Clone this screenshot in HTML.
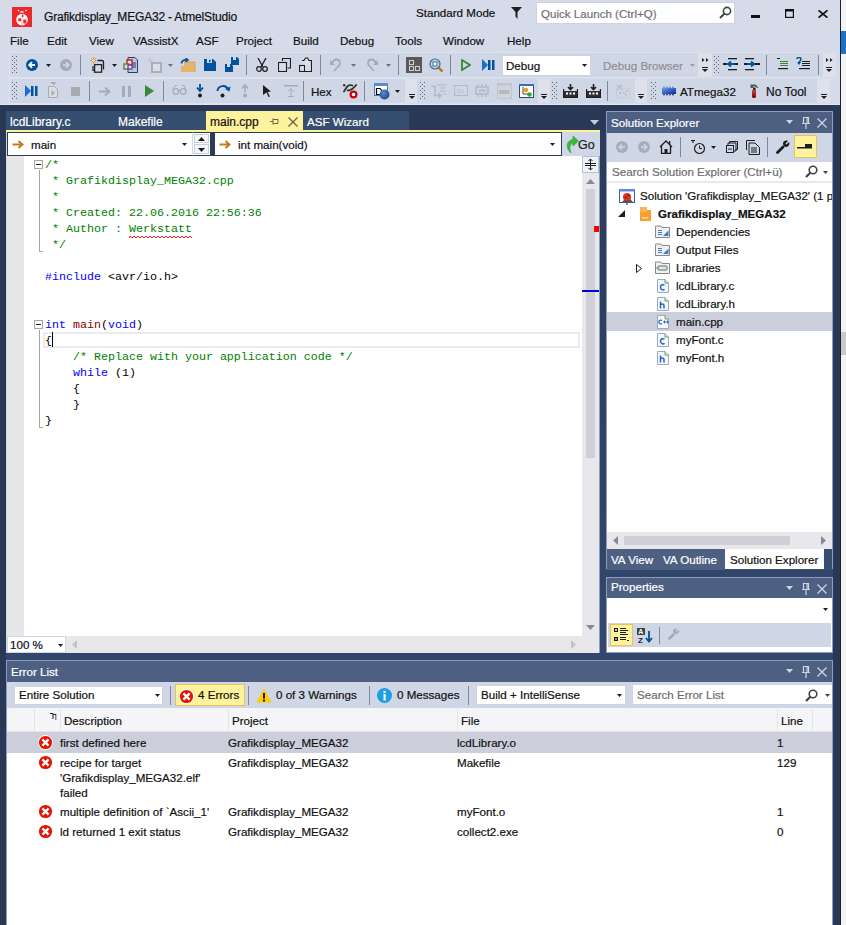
<!DOCTYPE html>
<html><head><meta charset="utf-8">
<style>
*{margin:0;padding:0;box-sizing:border-box}
html,body{width:846px;height:925px;overflow:hidden}
body{position:relative;background:#d6dbe9;font-family:"Liberation Sans",sans-serif;font-size:12px;color:#1e1e1e}
.a{position:absolute;display:block}
.t{position:absolute;white-space:nowrap;line-height:14px;-webkit-text-stroke:0.2px currentColor}
.code{position:absolute;left:45px;white-space:pre;font-family:"Liberation Mono",monospace;font-size:11.667px;line-height:16px;height:16px;color:#000}
</style></head><body>

<div class="a" style="left:841px;top:0px;width:5px;height:925px;background:#f3f3f3;"></div>
<div class="a" style="left:841px;top:31px;width:5px;height:23px;background:#1e72c6;"></div>
<div class="a" style="left:841px;top:332px;width:5px;height:23px;background:#c9c9c9;"></div>
<div class="a" style="left:840px;top:0px;width:1px;height:925px;background:#1a2030;"></div>
<div class="a" style="left:0px;top:105px;width:840px;height:820px;background:#293955;"></div>
<div class="a" style="left:0px;top:104px;width:840px;height:1px;background:#e3e6ef;"></div>
<div class="a" style="left:600px;top:132px;width:6px;height:521px;background:linear-gradient(#2b3b59,#34486b);"></div>
<div class="a" style="left:6px;top:653px;width:827px;height:7px;background:#32456a;"></div>
<div class="a" style="left:606px;top:569px;width:227px;height:8px;background:#32456a;"></div>
<svg class="a" style="left:12px;top:7px;" width="20" height="20" viewBox="0 0 20 20"><rect width="20" height="20" fill="#ea2a2a"/><circle cx="10" cy="12.6" r="5.8" fill="#fff"/><path d="M7.5 5.5Q10 2.5 12.5 5.5Z" fill="#fff"/><circle cx="6.5" cy="3.5" r="0.8" fill="#fff"/><circle cx="14" cy="3.5" r="0.8" fill="#fff"/><rect x="9.8" y="7.5" width="1.6" height="2.8" fill="#ea2a2a"/><rect x="6.3" y="11.3" width="3" height="3" fill="#ea2a2a"/><rect x="11.3" y="12.5" width="3" height="4" fill="#ea2a2a"/><rect x="9.6" y="13" width="0.9" height="6" fill="#f3a0a0"/></svg>
<div class="t" style="left:44px;top:10px;color:#111;font-size:12px;letter-spacing:-0.19px">Grafikdisplay_MEGA32 - AtmelStudio</div>
<div class="t" style="left:416px;top:6px;color:#111;font-size:11.6px;">Standard Mode</div>
<svg class="a" style="left:511px;top:7px;" width="11" height="12" viewBox="0 0 11 12"><path d="M0 0H11L6.5 5V12L4.5 9.5V5Z" fill="#1e1e1e"/></svg>
<div class="a" style="left:536px;top:2px;width:199px;height:22px;background:#fff;border:1px solid #cdd3e0"></div>
<div class="t" style="left:541px;top:7px;color:#717171;font-size:11.6px;">Quick Launch (Ctrl+Q)</div>
<svg class="a" style="left:719px;top:6px;" width="13" height="13" viewBox="0 0 13 13"><circle cx="8" cy="5" r="3.6" fill="none" stroke="#424242" stroke-width="1.6"/><path d="M5.5 7.5L1 12" stroke="#424242" stroke-width="2"/></svg>
<div class="a" style="left:751px;top:15px;width:9px;height:3px;background:#111;"></div>
<svg class="a" style="left:785px;top:9px;" width="9" height="9" viewBox="0 0 9 9"><rect x="0.6" y="0.6" width="7.8" height="7.8" fill="none" stroke="#111" stroke-width="1.2"/><rect x="0" y="0" width="9" height="2.5" fill="#111"/></svg>
<svg class="a" style="left:818px;top:10px;" width="10" height="8" viewBox="0 0 10 8"><path d="M0.5 0.3L9.5 7.7M9.5 0.3L0.5 7.7" stroke="#111" stroke-width="1.7"/></svg>
<div class="t" style="left:10px;top:34px;color:#111;font-size:11.6px;">File</div>
<div class="t" style="left:47px;top:34px;color:#111;font-size:11.6px;">Edit</div>
<div class="t" style="left:89px;top:34px;color:#111;font-size:11.6px;">View</div>
<div class="t" style="left:133px;top:34px;color:#111;font-size:11.6px;">VAssistX</div>
<div class="t" style="left:196px;top:34px;color:#111;font-size:11.6px;">ASF</div>
<div class="t" style="left:236px;top:34px;color:#111;font-size:11.6px;">Project</div>
<div class="t" style="left:293px;top:34px;color:#111;font-size:11.6px;">Build</div>
<div class="t" style="left:340px;top:34px;color:#111;font-size:11.6px;">Debug</div>
<div class="t" style="left:395px;top:34px;color:#111;font-size:11.6px;">Tools</div>
<div class="t" style="left:443px;top:34px;color:#111;font-size:11.6px;">Window</div>
<div class="t" style="left:507px;top:34px;color:#111;font-size:11.6px;">Help</div>
<div class="a" style="left:9px;top:52px;width:690px;height:26px;background:#dde2ec;"></div>
<div class="a" style="left:10px;top:53px;width:688px;height:24px;background:#cfd6e5;"></div>
<div class="a" style="left:698px;top:53px;width:13px;height:24px;background:#dce1eb;"></div>
<div class="a" style="left:711px;top:52px;width:113px;height:26px;background:#dde2ec;"></div>
<div class="a" style="left:712px;top:53px;width:111px;height:24px;background:#cfd6e5;"></div>
<div class="a" style="left:823px;top:53px;width:13px;height:24px;background:#dce1eb;"></div>
<div class="a" style="left:9px;top:78px;width:397px;height:26px;background:#dde2ec;"></div>
<div class="a" style="left:10px;top:79px;width:395px;height:24px;background:#cfd6e5;"></div>
<div class="a" style="left:405px;top:79px;width:12px;height:24px;background:#dce1eb;"></div>
<div class="a" style="left:417px;top:79px;width:121px;height:24px;background:#cfd6e5;"></div>
<div class="a" style="left:538px;top:79px;width:12px;height:24px;background:#dce1eb;"></div>
<div class="a" style="left:550px;top:79px;width:85px;height:24px;background:#cfd6e5;"></div>
<div class="a" style="left:635px;top:79px;width:12px;height:24px;background:#dce1eb;"></div>
<div class="a" style="left:647px;top:79px;width:170px;height:24px;background:#cfd6e5;"></div>
<div class="a" style="left:817px;top:79px;width:13px;height:24px;background:#dce1eb;"></div>
<svg class="a" style="left:12px;top:56px;" width="5" height="18" viewBox="0 0 5 18"><rect x="0" y="0" width="1" height="1" fill="#5f6777"/><rect x="4" y="0" width="1" height="1" fill="#5f6777"/><rect x="2" y="2" width="1" height="1" fill="#5f6777"/><rect x="0" y="4" width="1" height="1" fill="#5f6777"/><rect x="4" y="4" width="1" height="1" fill="#5f6777"/><rect x="2" y="6" width="1" height="1" fill="#5f6777"/><rect x="0" y="8" width="1" height="1" fill="#5f6777"/><rect x="4" y="8" width="1" height="1" fill="#5f6777"/><rect x="2" y="10" width="1" height="1" fill="#5f6777"/><rect x="0" y="12" width="1" height="1" fill="#5f6777"/><rect x="4" y="12" width="1" height="1" fill="#5f6777"/><rect x="2" y="14" width="1" height="1" fill="#5f6777"/><rect x="0" y="16" width="1" height="1" fill="#5f6777"/><rect x="4" y="16" width="1" height="1" fill="#5f6777"/></svg>
<svg class="a" style="left:714px;top:56px;" width="5" height="18" viewBox="0 0 5 18"><rect x="0" y="0" width="1" height="1" fill="#5f6777"/><rect x="4" y="0" width="1" height="1" fill="#5f6777"/><rect x="2" y="2" width="1" height="1" fill="#5f6777"/><rect x="0" y="4" width="1" height="1" fill="#5f6777"/><rect x="4" y="4" width="1" height="1" fill="#5f6777"/><rect x="2" y="6" width="1" height="1" fill="#5f6777"/><rect x="0" y="8" width="1" height="1" fill="#5f6777"/><rect x="4" y="8" width="1" height="1" fill="#5f6777"/><rect x="2" y="10" width="1" height="1" fill="#5f6777"/><rect x="0" y="12" width="1" height="1" fill="#5f6777"/><rect x="4" y="12" width="1" height="1" fill="#5f6777"/><rect x="2" y="14" width="1" height="1" fill="#5f6777"/><rect x="0" y="16" width="1" height="1" fill="#5f6777"/><rect x="4" y="16" width="1" height="1" fill="#5f6777"/></svg>
<svg class="a" style="left:12px;top:82px;" width="5" height="18" viewBox="0 0 5 18"><rect x="0" y="0" width="1" height="1" fill="#5f6777"/><rect x="4" y="0" width="1" height="1" fill="#5f6777"/><rect x="2" y="2" width="1" height="1" fill="#5f6777"/><rect x="0" y="4" width="1" height="1" fill="#5f6777"/><rect x="4" y="4" width="1" height="1" fill="#5f6777"/><rect x="2" y="6" width="1" height="1" fill="#5f6777"/><rect x="0" y="8" width="1" height="1" fill="#5f6777"/><rect x="4" y="8" width="1" height="1" fill="#5f6777"/><rect x="2" y="10" width="1" height="1" fill="#5f6777"/><rect x="0" y="12" width="1" height="1" fill="#5f6777"/><rect x="4" y="12" width="1" height="1" fill="#5f6777"/><rect x="2" y="14" width="1" height="1" fill="#5f6777"/><rect x="0" y="16" width="1" height="1" fill="#5f6777"/><rect x="4" y="16" width="1" height="1" fill="#5f6777"/></svg>
<svg class="a" style="left:420px;top:82px;" width="5" height="18" viewBox="0 0 5 18"><rect x="0" y="0" width="1" height="1" fill="#5f6777"/><rect x="4" y="0" width="1" height="1" fill="#5f6777"/><rect x="2" y="2" width="1" height="1" fill="#5f6777"/><rect x="0" y="4" width="1" height="1" fill="#5f6777"/><rect x="4" y="4" width="1" height="1" fill="#5f6777"/><rect x="2" y="6" width="1" height="1" fill="#5f6777"/><rect x="0" y="8" width="1" height="1" fill="#5f6777"/><rect x="4" y="8" width="1" height="1" fill="#5f6777"/><rect x="2" y="10" width="1" height="1" fill="#5f6777"/><rect x="0" y="12" width="1" height="1" fill="#5f6777"/><rect x="4" y="12" width="1" height="1" fill="#5f6777"/><rect x="2" y="14" width="1" height="1" fill="#5f6777"/><rect x="0" y="16" width="1" height="1" fill="#5f6777"/><rect x="4" y="16" width="1" height="1" fill="#5f6777"/></svg>
<svg class="a" style="left:552px;top:82px;" width="5" height="18" viewBox="0 0 5 18"><rect x="0" y="0" width="1" height="1" fill="#5f6777"/><rect x="4" y="0" width="1" height="1" fill="#5f6777"/><rect x="2" y="2" width="1" height="1" fill="#5f6777"/><rect x="0" y="4" width="1" height="1" fill="#5f6777"/><rect x="4" y="4" width="1" height="1" fill="#5f6777"/><rect x="2" y="6" width="1" height="1" fill="#5f6777"/><rect x="0" y="8" width="1" height="1" fill="#5f6777"/><rect x="4" y="8" width="1" height="1" fill="#5f6777"/><rect x="2" y="10" width="1" height="1" fill="#5f6777"/><rect x="0" y="12" width="1" height="1" fill="#5f6777"/><rect x="4" y="12" width="1" height="1" fill="#5f6777"/><rect x="2" y="14" width="1" height="1" fill="#5f6777"/><rect x="0" y="16" width="1" height="1" fill="#5f6777"/><rect x="4" y="16" width="1" height="1" fill="#5f6777"/></svg>
<svg class="a" style="left:651px;top:82px;" width="5" height="18" viewBox="0 0 5 18"><rect x="0" y="0" width="1" height="1" fill="#5f6777"/><rect x="4" y="0" width="1" height="1" fill="#5f6777"/><rect x="2" y="2" width="1" height="1" fill="#5f6777"/><rect x="0" y="4" width="1" height="1" fill="#5f6777"/><rect x="4" y="4" width="1" height="1" fill="#5f6777"/><rect x="2" y="6" width="1" height="1" fill="#5f6777"/><rect x="0" y="8" width="1" height="1" fill="#5f6777"/><rect x="4" y="8" width="1" height="1" fill="#5f6777"/><rect x="2" y="10" width="1" height="1" fill="#5f6777"/><rect x="0" y="12" width="1" height="1" fill="#5f6777"/><rect x="4" y="12" width="1" height="1" fill="#5f6777"/><rect x="2" y="14" width="1" height="1" fill="#5f6777"/><rect x="0" y="16" width="1" height="1" fill="#5f6777"/><rect x="4" y="16" width="1" height="1" fill="#5f6777"/></svg>
<svg class="a" style="left:702px;top:58px;" width="7" height="15" viewBox="0 0 7 15"><path d="M0 0L2.5 2L0 4ZM4 0L6.5 2L4 4Z" fill="#1e1e1e"/><rect x="0" y="9" width="6" height="1" fill="#1e1e1e"/><path d="M0 11H6L3 14Z" fill="#1e1e1e"/></svg>
<svg class="a" style="left:826px;top:58px;" width="7" height="15" viewBox="0 0 7 15"><path d="M0 0L2.5 2L0 4ZM4 0L6.5 2L4 4Z" fill="#1e1e1e"/><rect x="0" y="9" width="6" height="1" fill="#1e1e1e"/><path d="M0 11H6L3 14Z" fill="#1e1e1e"/></svg>
<svg class="a" style="left:409px;top:85px;" width="7" height="15" viewBox="0 0 7 15"><rect x="0" y="9" width="6" height="1" fill="#1e1e1e"/><path d="M0 11H6L3 14Z" fill="#1e1e1e"/></svg>
<svg class="a" style="left:541px;top:85px;" width="7" height="15" viewBox="0 0 7 15"><rect x="0" y="9" width="6" height="1" fill="#1e1e1e"/><path d="M0 11H6L3 14Z" fill="#1e1e1e"/></svg>
<svg class="a" style="left:638px;top:85px;" width="7" height="15" viewBox="0 0 7 15"><rect x="0" y="9" width="6" height="1" fill="#1e1e1e"/><path d="M0 11H6L3 14Z" fill="#1e1e1e"/></svg>
<svg class="a" style="left:821px;top:85px;" width="7" height="15" viewBox="0 0 7 15"><rect x="0" y="9" width="6" height="1" fill="#1e1e1e"/><path d="M0 11H6L3 14Z" fill="#1e1e1e"/></svg>
<svg class="a" style="left:26px;top:59px;" width="12" height="12" viewBox="0 0 12 12"><circle cx="6" cy="6" r="6" fill="#00539c"/><path d="M9 6H3.5M6 3.2L3.2 6L6 8.8" stroke="#fff" stroke-width="1.8" fill="none"/></svg>
<svg class="a" style="left:46px;top:64px;" width="5" height="3" viewBox="0 0 5 3"><path d="M0 0H5L2.5 3Z" fill="#1e1e1e"/></svg>
<svg class="a" style="left:60px;top:59px;" width="12" height="12" viewBox="0 0 12 12"><circle cx="6" cy="6" r="6" fill="#a6abb4"/><path d="M3 6H8.5M6 3.2L8.8 6L6 8.8" stroke="#d5d9e2" stroke-width="1.6" fill="none"/></svg>
<div class="a" style="left:80px;top:55px;width:1px;height:20px;background:#7b879d;"></div>
<svg class="a" style="left:90px;top:57px;" width="15" height="16" viewBox="0 0 15 16"><path d="M3.5 0.5V6.5M0.5 3.5H6.5M1.5 1.5L5.5 5.5M5.5 1.5L1.5 5.5" stroke="#d07a10" stroke-width="0.9"/><circle cx="3.5" cy="3.5" r="1.3" fill="#fff3d0"/><path d="M7.5 3.5H12C13 3.5 13.5 4 13.5 5V12.5" stroke="#222" fill="none" stroke-width="1.3"/><rect x="4.6" y="7.6" width="7" height="7.6" fill="#d5dae5" stroke="#222" stroke-width="1.3"/><path d="M3 9V13.5H4" stroke="#222" fill="none" stroke-width="1.2"/></svg>
<svg class="a" style="left:112px;top:64px;" width="5" height="3" viewBox="0 0 5 3"><path d="M0 0H5L2.5 3Z" fill="#1e1e1e"/></svg>
<svg class="a" style="left:123px;top:57px;" width="15" height="16" viewBox="0 0 15 16"><path d="M5 0.5H12L14.5 3V15.5H5Z" fill="#b6c7e6" stroke="#2c3e60"/><path d="M8 6H13M8 8H13M8 10H13" stroke="#2c3e60"/><rect x="4" y="3" width="5" height="5" fill="#fce" stroke="#c81e1e" stroke-width="1.4"/><rect x="1" y="7" width="5" height="5" fill="#fce" stroke="#3c8c3c" stroke-width="1.4"/><rect x="5" y="8" width="4" height="4" fill="#fce" stroke="#5a3c8c" stroke-width="1.2"/></svg>
<svg class="a" style="left:147px;top:57px;" width="15" height="16" viewBox="0 0 15 16"><path d="M3.5 0.5V6.5M0.5 3.5H6.5M1.5 1.5L5.5 5.5M5.5 1.5L1.5 5.5" stroke="#c3c7cf" stroke-width="0.9"/><rect x="5" y="6" width="9" height="9" fill="#d9dde6" stroke="#a6abb4" stroke-width="1.8"/></svg>
<svg class="a" style="left:168px;top:64px;" width="5" height="3" viewBox="0 0 5 3"><path d="M0 0H5L2.5 3Z" fill="#717171"/></svg>
<svg class="a" style="left:180px;top:58px;" width="16" height="15" viewBox="0 0 16 15"><path d="M4 4H15V14H1V8H4Z" fill="#dcb67a"/><path d="M4 4H15V14" fill="none" stroke="#e0a050"/><path d="M4 9H15L13 14H1Z" fill="#e8b45e"/><path d="M1.5 5.5C1.5 2.5 4 1.5 7 2" stroke="#00539c" stroke-width="1.8" fill="none"/><path d="M5.5 0L8 2L5.5 4" stroke="#00539c" stroke-width="1.6" fill="none"/></svg>
<svg class="a" style="left:204px;top:59px;" width="12" height="12" viewBox="0 0 12 12"><path d="M0 0H9L12 3V12H0Z" fill="#00539c"/><rect x="3" y="0" width="5" height="4" fill="#cfd6e5"/><rect x="5" y="0.8" width="1.5" height="2.5" fill="#00539c"/></svg>
<svg class="a" style="left:224px;top:57px;" width="16" height="16" viewBox="0 0 16 16"><path d="M7 0H13L15 2V8H7Z" fill="#00539c"/><rect x="9" y="0" width="3" height="3" fill="#cfd6e5"/><path d="M1 7H7L9 9V15H1Z" fill="#00539c"/><rect x="3" y="7" width="3" height="3" fill="#cfd6e5"/></svg>
<div class="a" style="left:246px;top:55px;width:1px;height:20px;background:#7b879d;"></div>
<svg class="a" style="left:255px;top:58px;" width="14" height="14" viewBox="0 0 14 14"><path d="M3 0L8 9M11 0L6 9" stroke="#1e1e1e" stroke-width="1.3"/><circle cx="4" cy="11" r="2.3" fill="none" stroke="#1e1e1e" stroke-width="1.2"/><circle cx="10" cy="11" r="2.3" fill="none" stroke="#1e1e1e" stroke-width="1.2"/></svg>
<svg class="a" style="left:278px;top:58px;" width="13" height="14" viewBox="0 0 13 14"><path d="M4.5 3V0.5H12.5V10H9.5" fill="none" stroke="#1e1e1e" stroke-width="1.1"/><rect x="0.5" y="4.5" width="8" height="9" fill="#d9dde6" stroke="#1e1e1e" stroke-width="1.1"/></svg>
<svg class="a" style="left:299px;top:57px;" width="13" height="15" viewBox="0 0 13 15"><path d="M3 3.5H5L6.5 1H8.5L10 3.5H12.5V14.5H6" fill="#d9dde6" stroke="#1e1e1e" stroke-width="1.1"/><rect x="0.5" y="8.5" width="5" height="6" fill="#d9dde6" stroke="#1e1e1e" stroke-width="1.1"/></svg>
<div class="a" style="left:320px;top:55px;width:1px;height:20px;background:#7b879d;"></div>
<svg class="a" style="left:330px;top:58px;" width="13" height="14" viewBox="0 0 13 14"><path d="M4 13L9 7.5C11 5.5 10 1.5 6.5 1.5C4.5 1.5 3 3 2 5" stroke="#a6abb4" stroke-width="1.8" fill="none"/><path d="M0 2V7H5Z" fill="#a6abb4"/></svg>
<svg class="a" style="left:351px;top:64px;" width="5" height="3" viewBox="0 0 5 3"><path d="M0 0H5L2.5 3Z" fill="#717171"/></svg>
<svg class="a" style="left:365px;top:58px;" width="13" height="14" viewBox="0 0 13 14"><path d="M9 13L4 7.5C2 5.5 3 1.5 6.5 1.5C8.5 1.5 10 3 11 5" stroke="#a6abb4" stroke-width="1.8" fill="none"/><path d="M13 2V7H8Z" fill="#a6abb4"/></svg>
<svg class="a" style="left:386px;top:64px;" width="5" height="3" viewBox="0 0 5 3"><path d="M0 0H5L2.5 3Z" fill="#717171"/></svg>
<div class="a" style="left:398px;top:55px;width:1px;height:20px;background:#7b879d;"></div>
<svg class="a" style="left:406px;top:57px;" width="16" height="16" viewBox="0 0 16 16"><rect width="16" height="16" fill="#595959"/><rect x="3.5" y="3.5" width="4" height="4" fill="none" stroke="#d0d0d0"/><rect x="3.5" y="9.5" width="4" height="4" fill="none" stroke="#d0d0d0"/><rect x="9.5" y="9.5" width="4" height="4" fill="none" stroke="#d0d0d0"/></svg>
<svg class="a" style="left:429px;top:58px;" width="15" height="15" viewBox="0 0 15 15"><path d="M9 9L13.5 13.5" stroke="#c76a12" stroke-width="2.4"/><circle cx="6" cy="6" r="5" fill="#a9dcf0" stroke="#4e6a84" stroke-width="1.2"/><rect x="4" y="4" width="4" height="4" fill="#fff" stroke="#4e6a84"/></svg>
<div class="a" style="left:450px;top:55px;width:1px;height:20px;background:#7b879d;"></div>
<svg class="a" style="left:461px;top:59px;" width="10" height="12" viewBox="0 0 10 12"><path d="M1 1L9 6L1 11Z" fill="none" stroke="#388a34" stroke-width="1.8"/></svg>
<svg class="a" style="left:482px;top:59px;" width="13" height="12" viewBox="0 0 13 12"><path d="M0 0L6 6L0 12Z" fill="#1c6ad6"/><rect x="6" y="1" width="2.5" height="10" fill="#00539c"/><rect x="10" y="1" width="2.5" height="10" fill="#00539c"/></svg>
<div class="a" style="left:502px;top:55px;width:89px;height:21px;background:#fff;border:1px solid #cdd3e0"></div>
<div class="t" style="left:506px;top:59px;color:#111;font-size:11.6px;">Debug</div>
<svg class="a" style="left:582px;top:64px;" width="5" height="3" viewBox="0 0 5 3"><path d="M0 0H5L2.5 3Z" fill="#1e1e1e"/></svg>
<div class="t" style="left:603px;top:59px;color:#8f8f93;font-size:11.6px;">Debug Browser</div>
<svg class="a" style="left:690px;top:64px;" width="5" height="3" viewBox="0 0 5 3"><path d="M0 0H5L2.5 3Z" fill="#9d9da5"/></svg>
<svg class="a" style="left:723px;top:58px;" width="15" height="13" viewBox="0 0 15 13"><rect x="5" y="0" width="9" height="1.3" fill="#1e1e1e"/><rect x="0" y="5" width="4" height="2" fill="#1e1e1e"/><rect x="9" y="5" width="6" height="2" fill="#1e1e1e"/><rect x="5" y="11" width="9" height="1.3" fill="#1e1e1e"/><path d="M12 6H5.5M8 3.5L5 6L8 8.5" stroke="#00539c" stroke-width="1.8" fill="none"/></svg>
<svg class="a" style="left:744px;top:58px;" width="16" height="13" viewBox="0 0 16 13"><rect x="1" y="0" width="9" height="1.3" fill="#1e1e1e"/><rect x="0" y="5" width="4" height="2" fill="#1e1e1e"/><rect x="10" y="5" width="6" height="2" fill="#1e1e1e"/><rect x="1" y="11" width="9" height="1.3" fill="#1e1e1e"/><path d="M3 6H9.5M7 3.5L10 6L7 8.5" stroke="#00539c" stroke-width="1.8" fill="none"/></svg>
<div class="a" style="left:766px;top:55px;width:1px;height:20px;background:#7b879d;"></div>
<svg class="a" style="left:777px;top:58px;" width="11" height="12" viewBox="0 0 11 12"><rect x="0" y="0" width="3" height="1" fill="#1e1e1e"/><rect x="3" y="3" width="8" height="1" fill="#388a34"/><rect x="3" y="5" width="8" height="1" fill="#388a34"/><rect x="3" y="7" width="8" height="1" fill="#388a34"/><rect x="1" y="10" width="10" height="1.2" fill="#1e1e1e"/></svg>
<svg class="a" style="left:796px;top:57px;" width="15" height="14" viewBox="0 0 15 14"><path d="M1 2C1 0 5 0 5 2C5 4 3 4 3 6" stroke="#00539c" stroke-width="1.5" fill="none"/><path d="M1 5L3 8L5 5" fill="#00539c"/><rect x="6" y="4" width="8" height="1" fill="#1e1e1e"/><rect x="6" y="6" width="8" height="1" fill="#1e1e1e"/><rect x="6" y="8" width="8" height="1" fill="#1e1e1e"/><rect x="3" y="11" width="11" height="1.2" fill="#1e1e1e"/></svg>
<div class="a" style="left:818px;top:55px;width:1px;height:20px;background:#7b879d;"></div>
<svg class="a" style="left:25px;top:85px;" width="13" height="12" viewBox="0 0 13 12"><path d="M0 0L6 6L0 12Z" fill="#1c6ad6"/><rect x="6" y="1" width="2.5" height="10" fill="#00539c"/><rect x="10" y="1" width="2.5" height="10" fill="#00539c"/></svg>
<svg class="a" style="left:48px;top:82px;" width="11" height="16" viewBox="0 0 11 16"><path d="M2 0H9L5.5 3Z" fill="#a6abb4"/><path d="M0.5 4.5H6.5L9.5 7.5V15.5H0.5Z" fill="#d9dde6" stroke="#a6abb4"/><path d="M3.5 8L7 11L3.5 14Z" fill="#a6abb4"/></svg>
<div class="a" style="left:71px;top:87px;width:9px;height:9px;background:#a6abb4;"></div>
<div class="a" style="left:89px;top:81px;width:1px;height:20px;background:#7b879d;"></div>
<svg class="a" style="left:99px;top:86px;" width="13" height="11" viewBox="0 0 13 11"><path d="M0 5.5H10M6 1.5L10.5 5.5L6 9.5" stroke="#a6abb4" stroke-width="1.8" fill="none"/></svg>
<svg class="a" style="left:122px;top:86px;" width="10" height="11" viewBox="0 0 10 11"><rect x="0" y="0" width="3" height="11" fill="#a6abb4"/><rect x="6" y="0" width="3" height="11" fill="#a6abb4"/></svg>
<svg class="a" style="left:145px;top:85px;" width="9" height="12" viewBox="0 0 9 12"><path d="M0 0L9 6L0 12Z" fill="#388a34"/></svg>
<div class="a" style="left:163px;top:81px;width:1px;height:20px;background:#7b879d;"></div>
<svg class="a" style="left:172px;top:85px;" width="15" height="10" viewBox="0 0 15 10"><path d="M1 5L3 0.5H5M14 5L12 0.5H10" stroke="#a6abb4" fill="none"/><circle cx="3.8" cy="6.5" r="2.8" fill="none" stroke="#a6abb4" stroke-width="1.3"/><circle cx="11.2" cy="6.5" r="2.8" fill="none" stroke="#a6abb4" stroke-width="1.3"/><path d="M6.5 6H8.5" stroke="#a6abb4"/></svg>
<svg class="a" style="left:196px;top:84px;" width="8" height="14" viewBox="0 0 8 14"><path d="M4 0V6M1 3.5L4 7L7 3.5" stroke="#00539c" stroke-width="1.8" fill="none"/><circle cx="4" cy="11.5" r="2" fill="#1e1e1e"/></svg>
<svg class="a" style="left:216px;top:84px;" width="15" height="14" viewBox="0 0 15 14"><path d="M1.5 7C2 1.5 10 0 12 5.5" stroke="#00539c" stroke-width="2" fill="none"/><path d="M9 5L13.5 7.5L14.5 2.5Z" fill="#00539c"/><circle cx="6.5" cy="11.5" r="2" fill="#1e1e1e"/></svg>
<svg class="a" style="left:241px;top:84px;" width="8" height="14" viewBox="0 0 8 14"><path d="M4 8V1.5M1 4.5L4 1L7 4.5" stroke="#a6abb4" stroke-width="1.6" fill="none"/><circle cx="4" cy="11.5" r="2" fill="#a6abb4"/></svg>
<svg class="a" style="left:263px;top:85px;" width="9" height="12" viewBox="0 0 9 12"><path d="M0 0L8 6.5L4.5 7L7 11.5L5.5 12L3.5 7.5L0 10Z" fill="#1e1e1e"/></svg>
<svg class="a" style="left:284px;top:85px;" width="14" height="12" viewBox="0 0 14 12"><rect x="0" y="0" width="14" height="1.5" fill="#a6abb4"/><path d="M7 11V4M4 6.5L7 3.5L10 6.5M4 11.5H10" stroke="#a6abb4" fill="none"/></svg>
<div class="a" style="left:303px;top:81px;width:1px;height:20px;background:#7b879d;"></div>
<div class="t" style="left:311px;top:85px;color:#111;font-size:11.6px;">Hex</div>
<svg class="a" style="left:340px;top:81px;" width="20" height="20" viewBox="0 0 20 20"><circle cx="4.2" cy="4.2" r="1.2" fill="#333"/><path d="M4 10.5L7.2 5.5C9 4.2 11 4 12.5 4.5M7.8 9.5C10 9.5 13 8 16.2 4" stroke="#333" stroke-width="1.8" stroke-linecap="round" fill="none"/><circle cx="13.5" cy="13.5" r="2.9" fill="#fff" stroke="#d40000" stroke-width="2.2"/><rect x="12.3" y="12.3" width="2.6" height="2.6" fill="#fff"/></svg>
<div class="a" style="left:364px;top:81px;width:1px;height:20px;background:#7b879d;"></div>
<svg class="a" style="left:374px;top:83px;" width="16" height="17" viewBox="0 0 16 17"><defs><radialGradient id="sph" cx="0.4" cy="0.35" r="0.7"><stop offset="0" stop-color="#5a8ad0"/><stop offset="1" stop-color="#1c4a8a"/></radialGradient></defs><rect x="0.5" y="0.5" width="13" height="12" fill="#fff" stroke="#4a78b8"/><rect x="0" y="0" width="14" height="3" fill="#5a8ad0"/><path d="M2.5 5.5H6L8 8V11.5H2.5Z" fill="none" stroke="#000" stroke-width="1.2"/><circle cx="10.5" cy="11.5" r="5" fill="url(#sph)"/></svg>
<svg class="a" style="left:395px;top:90px;" width="5" height="3" viewBox="0 0 5 3"><path d="M0 0H5L2.5 3Z" fill="#1e1e1e"/></svg>
<svg class="a" style="left:431px;top:84px;" width="15" height="15" viewBox="0 0 15 15"><path d="M0.5 2.5H4V11.5H10M7.5 9L10 11.5L7.5 14" stroke="#b5b9c1" stroke-width="1.5" fill="none"/><path d="M6 1H15M9 4H15M9 7H15M12 10H15" stroke="#b5b9c1"/></svg>
<svg class="a" style="left:454px;top:85px;" width="14" height="11" viewBox="0 0 14 11"><rect x="0.5" y="0.5" width="13" height="10" fill="none" stroke="#b5b9c1"/><text x="3" y="8" font-size="6" fill="#b5b9c1" font-family="Liberation Mono">0x</text></svg>
<svg class="a" style="left:475px;top:84px;" width="14" height="13" viewBox="0 0 14 13"><rect x="1" y="3" width="12" height="7" fill="none" stroke="#b5b9c1" stroke-width="1.6"/><rect x="3.5" y="5.5" width="7" height="2" fill="#b5b9c1"/><path d="M3 0V3M7 0V3M11 0V3M3 10V13M7 10V13M11 10V13" stroke="#b5b9c1" stroke-width="1.3"/></svg>
<svg class="a" style="left:497px;top:83px;" width="15" height="16" viewBox="0 0 15 16"><rect x="0.5" y="0.5" width="14" height="15" fill="#d0d4dc" stroke="#c0c4cc"/><rect x="0" y="0" width="15" height="2.5" fill="#c0c4cc"/><path d="M2 7H12L13 9L12 11H2Z" fill="#b5b9c1"/></svg>
<svg class="a" style="left:519px;top:84px;" width="15" height="14" viewBox="0 0 15 14"><rect x="0.5" y="0.5" width="14" height="13" fill="#fff" stroke="#2c4a78"/><rect x="0" y="0" width="15" height="2" fill="#3a6cc0"/><path d="M4 3V10H10" stroke="#444" fill="none"/><circle cx="7" cy="6" r="2.3" fill="#e99a2a"/><circle cx="10.5" cy="10.5" r="2.3" fill="#3ea13e"/></svg>
<svg class="a" style="left:563px;top:84px;" width="15" height="14" viewBox="0 0 15 14"><path d="M7.5 0V5M5 3L7.5 5.5L10 3" stroke="#1e1e1e" stroke-width="1.6" fill="none"/><path d="M0.5 5V13.5H14.5V5" stroke="#1e1e1e" stroke-width="1.3" fill="none"/><rect x="0" y="7" width="15" height="7" fill="#1e1e1e" opacity="0.9"/><rect x="3" y="8.5" width="2" height="2" fill="#fff"/><rect x="6.5" y="8.5" width="2" height="2" fill="#fff"/><rect x="10" y="8.5" width="2" height="2" fill="#fff"/></svg>
<svg class="a" style="left:586px;top:84px;" width="15" height="14" viewBox="0 0 15 14"><path d="M7.5 0V5M5 3L7.5 5.5L10 3" stroke="#1e1e1e" stroke-width="1.6" fill="none"/><path d="M0.5 5V13.5H14.5V5" stroke="#1e1e1e" stroke-width="1.3" fill="none"/><rect x="0" y="7" width="15" height="7" fill="#1e1e1e" opacity="0.9"/><rect x="3" y="8.5" width="2" height="2" fill="#fff"/><rect x="6.5" y="8.5" width="2" height="2" fill="#fff"/><rect x="10" y="8.5" width="2" height="2" fill="#fff"/></svg>
<div class="a" style="left:607px;top:81px;width:1px;height:20px;background:#7b879d;"></div>
<svg class="a" style="left:616px;top:84px;" width="15" height="14" viewBox="0 0 15 14"><path d="M1 1L6 6M6 1L1 6" stroke="#b5b9c1" stroke-width="1.3"/><rect x="0.5" y="4.5" width="13" height="9" fill="none" stroke="#c8ccd4"/><circle cx="4" cy="9" r="1" fill="#b5b9c1"/><circle cx="8" cy="9" r="1" fill="#b5b9c1"/><circle cx="11" cy="7" r="1" fill="#b5b9c1"/><circle cx="10" cy="11" r="1" fill="#b5b9c1"/></svg>
<svg class="a" style="left:662px;top:86px;" width="14" height="10" viewBox="0 0 14 10"><defs><linearGradient id="chip" x1="0" y1="0" x2="1" y2="1"><stop offset="0" stop-color="#6a9af5"/><stop offset="1" stop-color="#0a2a8a"/></linearGradient></defs><rect x="0" y="2" width="14" height="6" fill="url(#chip)"/><path d="M1 2L2 0L3 2ZM4 2L5 0L6 2ZM7 2L8 0L9 2ZM10 2L11 0L12 2Z" fill="#4a7ae8"/><path d="M1 8L2 10L3 8ZM4 8L5 10L6 8ZM7 8L8 10L9 8ZM10 8L11 10L12 8Z" fill="#0a2070"/></svg>
<div class="t" style="left:680px;top:85px;color:#111;font-size:11.6px;">ATmega32</div>
<svg class="a" style="left:750px;top:83px;" width="9" height="16" viewBox="0 0 9 16"><defs><linearGradient id="ham" x1="0" y1="0" x2="0" y2="1"><stop offset="0" stop-color="#c84a30"/><stop offset="1" stop-color="#7a0010"/></linearGradient></defs><path d="M0.5 1.5H5.5L8.5 4.5L7.5 5L5 3.5H3V5H0.5Z" fill="#555"/><rect x="3" y="4.5" width="2.6" height="2.5" fill="#2a2a2a"/><path d="M2 7H6V14L5 15H3L2 14Z" fill="url(#ham)"/></svg>
<div class="t" style="left:766px;top:85px;color:#111;font-size:12px;">No Tool</div>
<div class="a" style="left:6px;top:111px;width:403px;height:20px;background:#364e6f;"></div>
<div class="a" style="left:206px;top:111px;width:97px;height:20px;background:#fff29d;"></div>
<div class="a" style="left:6px;top:130px;width:594px;height:2px;background:#fff29d;"></div>
<div class="t" style="left:10px;top:115px;color:#ffffff;font-size:12px;">lcdLibrary.c</div>
<div class="t" style="left:118px;top:115px;color:#ffffff;font-size:12px;">Makefile</div>
<div class="t" style="left:210px;top:115px;color:#111;font-size:12px;">main.cpp</div>
<svg class="a" style="left:270px;top:118px;" width="9" height="7" viewBox="0 0 9 7"><path d="M0 3.5H3M3 0.5V6.5M3 1.5H8V5.5H3" stroke="#6b6546" fill="none" stroke-width="1"/></svg>
<svg class="a" style="left:288px;top:117px;" width="10" height="10" viewBox="0 0 10 10"><path d="M0.5 0.5L9.5 9.5M9.5 0.5L0.5 9.5" stroke="#6b6546" stroke-width="1.4"/></svg>
<div class="t" style="left:307px;top:115px;color:#ffffff;font-size:11.6px;">ASF Wizard</div>
<svg class="a" style="left:590px;top:120px;" width="9" height="5" viewBox="0 0 9 5"><path d="M0 0H9L4.5 5Z" fill="#c6cbd6"/></svg>
<div class="a" style="left:6px;top:132px;width:594px;height:24px;background:#cfd6e5;"></div>
<div class="a" style="left:7px;top:132px;width:185px;height:24px;background:#fff;border:1px solid #2b3b58;border-right:none"></div>
<div class="a" style="left:192px;top:132px;width:18px;height:24px;background:#fff;border-top:1px solid #2b3b58;border-bottom:1px solid #2b3b58;border-left:1px solid #cfd6e5"></div>
<div class="a" style="left:194px;top:134px;width:15px;height:9px;background:#f5f6f9;border:1px solid #c8d0de"></div>
<div class="a" style="left:194px;top:144px;width:15px;height:10px;background:#f5f6f9;border:1px solid #c8d0de"></div>
<svg class="a" style="left:198px;top:137px;" width="7" height="4" viewBox="0 0 7 4"><path d="M0 4H7L3.5 0Z" fill="#1e1e1e"/></svg>
<svg class="a" style="left:198px;top:148px;" width="7" height="4" viewBox="0 0 7 4"><path d="M0 0H7L3.5 4Z" fill="#1e1e1e"/></svg>
<div class="a" style="left:210px;top:132px;width:5px;height:24px;background:#2b3b58;"></div>
<div class="a" style="left:215px;top:132px;width:347px;height:24px;background:#fff;border:1px solid #2b3b58;border-left:none"></div>
<svg class="a" style="left:12px;top:140px;" width="12" height="9" viewBox="0 0 12 9"><path d="M0.5 4.5H10M6.5 1L10.5 4.5L6.5 8" stroke="#c27d1a" stroke-width="2" fill="none"/></svg>
<div class="t" style="left:31px;top:138px;color:#111;font-size:11.6px;">main</div>
<svg class="a" style="left:182px;top:143px;" width="5" height="3" viewBox="0 0 5 3"><path d="M0 0H5L2.5 3Z" fill="#1e1e1e"/></svg>
<svg class="a" style="left:219px;top:140px;" width="12" height="9" viewBox="0 0 12 9"><path d="M0.5 4.5H10M6.5 1L10.5 4.5L6.5 8" stroke="#c27d1a" stroke-width="2" fill="none"/></svg>
<div class="t" style="left:238px;top:138px;color:#111;font-size:11.6px;">int main(void)</div>
<svg class="a" style="left:550px;top:143px;" width="5" height="3" viewBox="0 0 5 3"><path d="M0 0H5L2.5 3Z" fill="#1e1e1e"/></svg>
<svg class="a" style="left:565px;top:135px;" width="14" height="19" viewBox="0 0 14 19"><path d="M6 18C1 14 1 7 6 5L8 4.5V1L13.5 6L8 11V8C5 8.5 4 13 6 18Z" fill="#3cb83c" stroke="#2a9a2a" stroke-width="0.6"/></svg>
<div class="t" style="left:578px;top:138px;color:#1e1e1e;font-size:12.5px;">Go</div>
<div class="a" style="left:6px;top:156px;width:594px;height:497px;background:#fff;"></div>
<div class="a" style="left:6px;top:156px;width:1px;height:497px;background:#cfd6e5;"></div>
<div class="a" style="left:7px;top:156px;width:17px;height:480px;background:#e6e7e8;"></div>
<div class="a" style="left:582px;top:156px;width:18px;height:480px;background:#e8e8ec;"></div>
<div class="a" style="left:582px;top:156px;width:17px;height:17px;background:#eef1f8;border:1px solid #b9c1d1"></div>
<svg class="a" style="left:585px;top:159px;" width="11" height="11" viewBox="0 0 11 11"><path d="M5.5 0V11M3.5 2L5.5 0L7.5 2M3.5 9L5.5 11L7.5 9M0 4.5H11M0 6.5H11" stroke="#1e1e1e" stroke-width="1" fill="none"/></svg>
<svg class="a" style="left:586px;top:179px;" width="9" height="5" viewBox="0 0 9 5"><path d="M0 5H9L4.5 0Z" fill="#868999"/></svg>
<div class="a" style="left:586px;top:189px;width:9px;height:269px;background:#cfd0d5;"></div>
<div class="a" style="left:594px;top:226px;width:5px;height:6px;background:#ff0000;"></div>
<div class="a" style="left:582px;top:290px;width:17px;height:2px;background:#0000cd;"></div>
<svg class="a" style="left:586px;top:625px;" width="9" height="5" viewBox="0 0 9 5"><path d="M0 0H9L4.5 5Z" fill="#868999"/></svg>
<div class="a" style="left:6px;top:636px;width:594px;height:17px;background:#e8e8ec;"></div>
<div class="a" style="left:7px;top:636px;width:59px;height:17px;background:#fff;border:1px solid #cfd6e5"></div>
<div class="t" style="left:10px;top:638px;color:#111;font-size:11.6px;">100 %</div>
<svg class="a" style="left:58px;top:644px;" width="5" height="3" viewBox="0 0 5 3"><path d="M0 0H5L2.5 3Z" fill="#1e1e1e"/></svg>
<svg class="a" style="left:72px;top:640px;" width="5" height="9" viewBox="0 0 5 9"><path d="M5 0V9L0 4.5Z" fill="#c2c3c9"/></svg>
<svg class="a" style="left:571px;top:640px;" width="5" height="9" viewBox="0 0 5 9"><path d="M0 0V9L5 4.5Z" fill="#c2c3c9"/></svg>
<svg class="a" style="left:34px;top:160px;" width="9" height="9" viewBox="0 0 9 9"><rect x="0.5" y="0.5" width="8" height="8" fill="#fff" stroke="#a5a5a5"/><rect x="2" y="4" width="5" height="1" fill="#1e1e1e"/></svg>
<div class="a" style="left:39px;top:170px;width:1px;height:82px;background:#a5a5a5;"></div>
<div class="a" style="left:39px;top:251px;width:4px;height:1px;background:#a5a5a5;"></div>
<svg class="a" style="left:34px;top:320px;" width="9" height="9" viewBox="0 0 9 9"><rect x="0.5" y="0.5" width="8" height="8" fill="#fff" stroke="#a5a5a5"/><rect x="2" y="4" width="5" height="1" fill="#1e1e1e"/></svg>
<div class="a" style="left:39px;top:330px;width:1px;height:98px;background:#a5a5a5;"></div>
<div class="a" style="left:39px;top:427px;width:4px;height:1px;background:#a5a5a5;"></div>
<div class="a" style="left:43px;top:332px;width:537px;height:16px;background:#fff;border:2px solid #eaeaf2"></div>
<div class="a" style="left:52px;top:332px;width:1px;height:15px;background:#000;"></div>
<div class="code" style="top:157px"><span style="color:#008000">/*</span></div>
<div class="code" style="top:173px"><span style="color:#008000"> * Grafikdisplay_MEGA32.cpp</span></div>
<div class="code" style="top:189px"><span style="color:#008000"> *</span></div>
<div class="code" style="top:205px"><span style="color:#008000"> * Created: 22.06.2016 22:56:36</span></div>
<div class="code" style="top:221px"><span style="color:#008000"> * Author : Werkstatt</span></div>
<div class="code" style="top:237px"><span style="color:#008000"> */</span></div>
<div class="code" style="top:269px"><span style="color:#0000ff">#include</span> &lt;avr/io.h&gt;</div>
<div class="code" style="top:317px"><span style="color:#0000ff">int</span> <span style="color:#880000">main</span>(<span style="color:#0000ff">void</span>)</div>
<div class="code" style="top:333px">{</div>
<div class="code" style="top:349px">    <span style="color:#008000">/* Replace with your application code */</span></div>
<div class="code" style="top:365px">    <span style="color:#0000ff">while</span> (1)</div>
<div class="code" style="top:381px">    {</div>
<div class="code" style="top:397px">    }</div>
<div class="code" style="top:413px">}</div>
<svg class="a" style="left:129px;top:236px;" width="64" height="3" viewBox="0 0 64 3"><path d="M0 2L1 0L3 2L5 0L7 2L9 0L11 2L13 0L15 2L17 0L19 2L21 0L23 2L25 0L27 2L29 0L31 2L33 0L35 2L37 0L39 2L41 0L43 2L45 0L47 2L49 0L51 2L53 0L55 2L57 0L59 2L61 0L63 2" stroke="#ff0000" stroke-width="0.9" fill="none"/></svg>
<div class="a" style="left:606px;top:111px;width:227px;height:458px;background:#fff;"></div>
<div class="a" style="left:606px;top:111px;width:227px;height:22px;background:#4d6082;border:1px solid #8e9cc2;border-bottom:none"></div>
<div class="t" style="left:611px;top:116px;color:#ffffff;font-size:11.6px;">Solution Explorer</div>
<svg class="a" style="left:786px;top:120px;" width="7" height="4" viewBox="0 0 7 4"><path d="M0 0H7L3.5 4Z" fill="#ced4e0"/></svg>
<svg class="a" style="left:802px;top:117px;" width="8" height="12" viewBox="0 0 8 12"><path d="M1.5 0.5H6.5V6.5H1.5Z M0 6.5H8 M4 6.5V12" stroke="#ced4e0" fill="none" stroke-width="1.2"/><rect x="4.5" y="0.5" width="1.2" height="6" fill="#ced4e0"/></svg>
<svg class="a" style="left:817px;top:118px;" width="10" height="10" viewBox="0 0 10 10"><path d="M0.5 0.5L9.5 9.5M9.5 0.5L0.5 9.5" stroke="#ced4e0" stroke-width="1.3"/></svg>
<div class="a" style="left:606px;top:133px;width:227px;height:28px;background:#cfd6e5;"></div>
<svg class="a" style="left:616px;top:141px;" width="12" height="12" viewBox="0 0 12 12"><circle cx="6" cy="6" r="6" fill="#a9adb5"/><path d="M9 6H3.5M6 3.2L3.2 6L6 8.8" stroke="#cfd6e5" stroke-width="1.6" fill="none"/></svg>
<svg class="a" style="left:638px;top:141px;" width="12" height="12" viewBox="0 0 12 12"><circle cx="6" cy="6" r="6" fill="#a9adb5"/><path d="M3 6H8.5M6 3.2L8.8 6L6 8.8" stroke="#cfd6e5" stroke-width="1.6" fill="none"/></svg>
<svg class="a" style="left:659px;top:140px;" width="14" height="14" viewBox="0 0 14 14"><path d="M1 7L7 1L13 7" stroke="#1e1e1e" stroke-width="1.3" fill="none"/><path d="M2.5 6V13.5H11.5V6" stroke="#1e1e1e" stroke-width="1.3" fill="none"/><rect x="5.5" y="9" width="3" height="5" fill="#1e1e1e"/><rect x="10" y="1" width="1.3" height="4" fill="#1e1e1e"/></svg>
<div class="a" style="left:680px;top:137px;width:1px;height:20px;background:#7b879d;"></div>
<svg class="a" style="left:691px;top:140px;" width="15" height="15" viewBox="0 0 15 15"><path d="M0 0.5H4M2 0.5V3" stroke="#1e1e1e" stroke-width="1.2"/><circle cx="8.5" cy="8.5" r="5" fill="none" stroke="#1e1e1e" stroke-width="1.2"/><path d="M8.5 5.5V8.5H11" stroke="#1e1e1e" fill="none"/></svg>
<svg class="a" style="left:711px;top:146px;" width="5" height="3" viewBox="0 0 5 3"><path d="M0 0H5L2.5 3Z" fill="#1e1e1e"/></svg>
<svg class="a" style="left:726px;top:141px;" width="12" height="12" viewBox="0 0 12 12"><path d="M3.5 2.5V0.5H11.5V8.5H9.5M2 4V2H10V10H8" stroke="#1e1e1e" fill="none"/><rect x="0.5" y="4.5" width="7" height="7" fill="#cfd6e5" stroke="#1e1e1e"/><rect x="2" y="7.5" width="4" height="1.2" fill="#00539c"/></svg>
<svg class="a" style="left:746px;top:140px;" width="15" height="15" viewBox="0 0 15 15"><path d="M0.5 10V0.5H9" stroke="#1e1e1e" fill="none"/><path d="M3 3H9L13.5 7.5V14.5H3Z" fill="#cfd6e5" stroke="#1e1e1e"/><path d="M5 8H11M5 10H11M5 12H11" stroke="#1e1e1e"/></svg>
<div class="a" style="left:767px;top:137px;width:1px;height:20px;background:#7b879d;"></div>
<svg class="a" style="left:776px;top:140px;" width="14" height="14" viewBox="0 0 14 14"><path d="M1.5 12.5L7 7" stroke="#1e1e1e" stroke-width="2.8" stroke-linecap="round"/><path d="M7 3.5C7 1 10 -0.2 12 1L9.5 3.5L10.5 4.5L13 2C14.2 4 12.5 7 10 7C8 7 7 5.5 7 3.5Z" fill="#1e1e1e"/></svg>
<div class="a" style="left:794px;top:135px;width:23px;height:23px;background:#fff29d;border:1px solid #e5c365"></div>
<svg class="a" style="left:797px;top:144px;" width="16" height="6" viewBox="0 0 16 6"><rect x="0" y="3" width="15" height="1.5" fill="#1e1e1e"/><rect x="8" y="0" width="7" height="4" fill="#1e1e1e"/></svg>
<div class="a" style="left:606px;top:161px;width:227px;height:22px;background:#fff;border-top:1px solid #cfd6e5;border-bottom:2px solid #e6e9f0"></div>
<div class="t" style="left:612px;top:165px;color:#6d6d6d;font-size:11.6px;">Search Solution Explorer (Ctrl+ü)</div>
<svg class="a" style="left:805px;top:165px;" width="13" height="13" viewBox="0 0 13 13"><circle cx="8" cy="5" r="3.8" fill="none" stroke="#424242" stroke-width="1.6"/><path d="M5.3 7.7L1 12" stroke="#424242" stroke-width="2.2"/></svg>
<svg class="a" style="left:823px;top:171px;" width="5" height="3" viewBox="0 0 5 3"><path d="M0 0H5L2.5 3Z" fill="#424242"/></svg>
<div class="a" style="left:606px;top:312px;width:227px;height:19px;background:#cccedb;"></div>
<svg class="a" style="left:619px;top:189px;" width="16" height="16" viewBox="0 0 16 16"><rect x="0.5" y="0.5" width="15" height="13" fill="#fff" stroke="#3c5a8a"/><rect x="0" y="0" width="16" height="2.5" fill="#5a8ae0"/><path d="M3 13L6 10H11L14 13Z" fill="#555"/><circle cx="8" cy="8" r="4" fill="#e03020"/><circle cx="6.5" cy="8.5" r="0.8" fill="#222"/><circle cx="9.5" cy="6.5" r="0.8" fill="#222"/><rect x="7.5" y="14" width="1" height="2" fill="#222"/></svg>
<div class="t" style="left:640px;top:189px;color:#111;font-size:11.6px;">Solution 'Grafikdisplay_MEGA32' (1 p</div>
<svg class="a" style="left:618px;top:210px;" width="7" height="7" viewBox="0 0 7 7"><path d="M7 0V7H0Z" fill="#1e1e1e"/></svg>
<svg class="a" style="left:640px;top:207px;" width="11" height="14" viewBox="0 0 11 14"><path d="M0 0H7V3H11V14H0Z" fill="#f7a030"/><rect x="0" y="0" width="7" height="5" fill="#f9b457"/><rect x="2" y="10" width="6" height="1.5" fill="#fde0b8"/></svg>
<div class="t" style="left:658px;top:207px;color:#111;font-size:11.6px;font-weight:bold">Grafikdisplay_MEGA32</div>
<svg class="a" style="left:655px;top:225px;" width="16" height="14" viewBox="0 0 16 14"><path d="M0.5 2.5V1H6L7 2.5H14.5V12.5H0.5Z" fill="#f0f0f0" stroke="#888"/><path d="M3 5.5H7M3 7.5H7M3 9.5H7" stroke="#3c78d0"/><path d="M8 11H13.5V5.5Z" fill="#3c78d0"/></svg>
<div class="t" style="left:676px;top:225px;color:#111;font-size:11.6px;">Dependencies</div>
<svg class="a" style="left:655px;top:243px;" width="16" height="14" viewBox="0 0 16 14"><path d="M0.5 2.5V1H6L7 2.5H14.5V12.5H0.5Z" fill="#f0f0f0" stroke="#888"/><path d="M3 5.5H7M3 7.5H7M3 9.5H7" stroke="#3c78d0"/><path d="M8 11H13.5V5.5Z" fill="#3c78d0"/></svg>
<div class="t" style="left:676px;top:243px;color:#111;font-size:11.6px;">Output Files</div>
<svg class="a" style="left:636px;top:264px;" width="6" height="9" viewBox="0 0 6 9"><path d="M0.5 0.5L5.5 4.5L0.5 8.5Z" fill="#fff" stroke="#1e1e1e"/></svg>
<svg class="a" style="left:655px;top:261px;" width="16" height="14" viewBox="0 0 16 14"><path d="M0.5 2.5V1H6L7 2.5H14.5V12.5H0.5Z" fill="#f0f0f0" stroke="#888"/><rect x="3" y="5" width="9" height="4" rx="1" fill="#dfe8f0" stroke="#666"/><path d="M1 7H3" stroke="#3ca0a0"/></svg>
<div class="t" style="left:676px;top:261px;color:#111;font-size:11.6px;">Libraries</div>
<svg class="a" style="left:657px;top:279px;" width="12" height="14" viewBox="0 0 12 14"><path d="M0.5 0.5H8L11.5 4V13.5H0.5Z" fill="#f4f7fb" stroke="#9aaac0"/><path d="M8 0.5V4H11.5" fill="#dce8d8" stroke="#6aa06a"/><path d="M7.5 6.3C6.5 5.3 3.5 5.3 3.5 8.3C3.5 11.3 6.5 11.3 7.5 10.3" stroke="#2a63b8" stroke-width="1.5" fill="none"/></svg>
<div class="t" style="left:676px;top:279px;color:#111;font-size:11.6px;">lcdLibrary.c</div>
<svg class="a" style="left:657px;top:297px;" width="12" height="14" viewBox="0 0 12 14"><path d="M0.5 0.5H8L11.5 4V13.5H0.5Z" fill="#f4f7fb" stroke="#9aaac0"/><path d="M8 0.5V4H11.5" fill="#dce8d8" stroke="#6aa06a"/><path d="M3.5 4.5V11.5M3.5 8C4 6.5 7 6.5 7 8.5V11.5" stroke="#2a63b8" stroke-width="1.5" fill="none"/></svg>
<div class="t" style="left:676px;top:297px;color:#111;font-size:11.6px;">lcdLibrary.h</div>
<svg class="a" style="left:657px;top:315px;" width="12" height="14" viewBox="0 0 12 14"><path d="M0.5 0.5H8L11.5 4V13.5H0.5Z" fill="#f4f7fb" stroke="#9aaac0"/><path d="M8 0.5V4H11.5" fill="#dce8d8" stroke="#6aa06a"/><path d="M5 5.5C4 4.8 1.8 5 1.8 7C1.8 9 4 9.2 5 8.5" stroke="#2a63b8" stroke-width="1.2" fill="none"/><path d="M6 7H9M7.5 5.5V8.5M9 7H12M10.5 5.5V8.5" stroke="#2a63b8" stroke-width="0.9"/></svg>
<div class="t" style="left:676px;top:315px;color:#111;font-size:11.6px;">main.cpp</div>
<svg class="a" style="left:657px;top:333px;" width="12" height="14" viewBox="0 0 12 14"><path d="M0.5 0.5H8L11.5 4V13.5H0.5Z" fill="#f4f7fb" stroke="#9aaac0"/><path d="M8 0.5V4H11.5" fill="#dce8d8" stroke="#6aa06a"/><path d="M7.5 6.3C6.5 5.3 3.5 5.3 3.5 8.3C3.5 11.3 6.5 11.3 7.5 10.3" stroke="#2a63b8" stroke-width="1.5" fill="none"/></svg>
<div class="t" style="left:676px;top:333px;color:#111;font-size:11.6px;">myFont.c</div>
<svg class="a" style="left:657px;top:351px;" width="12" height="14" viewBox="0 0 12 14"><path d="M0.5 0.5H8L11.5 4V13.5H0.5Z" fill="#f4f7fb" stroke="#9aaac0"/><path d="M8 0.5V4H11.5" fill="#dce8d8" stroke="#6aa06a"/><path d="M3.5 4.5V11.5M3.5 8C4 6.5 7 6.5 7 8.5V11.5" stroke="#2a63b8" stroke-width="1.5" fill="none"/></svg>
<div class="t" style="left:676px;top:351px;color:#111;font-size:11.6px;">myFont.h</div>
<div class="a" style="left:606px;top:532px;width:227px;height:17px;background:#e8e8ec;"></div>
<svg class="a" style="left:613px;top:536px;" width="5" height="9" viewBox="0 0 5 9"><path d="M5 0V9L0 4.5Z" fill="#868999"/></svg>
<div class="a" style="left:624px;top:536px;width:166px;height:9px;background:#cfd0d5;"></div>
<svg class="a" style="left:821px;top:536px;" width="5" height="9" viewBox="0 0 5 9"><path d="M0 0V9L5 4.5Z" fill="#868999"/></svg>
<div class="a" style="left:606px;top:549px;width:227px;height:21px;background:#364e6f;"></div>
<div class="a" style="left:606px;top:549px;width:119px;height:21px;background:#4d6082;"></div>
<div class="a" style="left:725px;top:549px;width:99px;height:20px;background:#ffffff;"></div>
<div class="t" style="left:611px;top:553px;color:#ffffff;font-size:11.6px;">VA View</div>
<div class="t" style="left:663px;top:553px;color:#ffffff;font-size:11.6px;">VA Outline</div>
<div class="t" style="left:730px;top:553px;color:#111;font-size:11.6px;">Solution Explorer</div>
<div class="a" style="left:606px;top:577px;width:227px;height:76px;background:#fff;"></div>
<div class="a" style="left:606px;top:577px;width:227px;height:21px;background:#4d6082;border:1px solid #8e9cc2;border-bottom:none"></div>
<div class="t" style="left:611px;top:580px;color:#ffffff;font-size:11.6px;">Properties</div>
<svg class="a" style="left:786px;top:586px;" width="7" height="4" viewBox="0 0 7 4"><path d="M0 0H7L3.5 4Z" fill="#ced4e0"/></svg>
<svg class="a" style="left:802px;top:583px;" width="8" height="12" viewBox="0 0 8 12"><path d="M1.5 0.5H6.5V6.5H1.5Z M0 6.5H8 M4 6.5V12" stroke="#ced4e0" fill="none" stroke-width="1.2"/><rect x="4.5" y="0.5" width="1.2" height="6" fill="#ced4e0"/></svg>
<svg class="a" style="left:817px;top:584px;" width="10" height="10" viewBox="0 0 10 10"><path d="M0.5 0.5L9.5 9.5M9.5 0.5L0.5 9.5" stroke="#ced4e0" stroke-width="1.3"/></svg>
<svg class="a" style="left:823px;top:608px;" width="5" height="3" viewBox="0 0 5 3"><path d="M0 0H5L2.5 3Z" fill="#1e1e1e"/></svg>
<div class="a" style="left:608px;top:623px;width:223px;height:24px;background:#cfd6e5;"></div>
<div class="a" style="left:610px;top:624px;width:23px;height:22px;background:#fff29d;border:1px solid #e5c365"></div>
<svg class="a" style="left:614px;top:628px;" width="15" height="15" viewBox="0 0 15 15"><rect x="0" y="0" width="4" height="4" fill="#1e1e1e"/><rect x="1.5" y="1" width="1" height="2" fill="#fff"/><rect x="1" y="1.5" width="2" height="1" fill="#fff"/><path d="M6 0.5H12M6 2.5H14M6 4.5H12M6 6.5H14" stroke="#1e1e1e"/><rect x="0" y="9" width="4" height="4" fill="#1e1e1e"/><rect x="1" y="10.5" width="2" height="1" fill="#fff"/><path d="M6 9.5H12M6 11.5H12M13 12.5H15" stroke="#1e1e1e"/></svg>
<svg class="a" style="left:637px;top:628px;" width="16" height="15" viewBox="0 0 16 15"><rect x="0" y="0" width="8" height="7" fill="#424242"/><text x="1.2" y="6.2" font-size="7" font-weight="bold" fill="#fff" font-family="Liberation Sans">A</text><text x="1" y="14.5" font-size="8" font-weight="bold" fill="#1e1e1e" font-family="Liberation Sans">Z</text><path d="M12 3V13M9 10L12 13.5L15 10" stroke="#00539c" stroke-width="1.8" fill="none"/></svg>
<div class="a" style="left:659px;top:627px;width:1px;height:17px;background:#7b879d;"></div>
<svg class="a" style="left:668px;top:628px;" width="12" height="12" viewBox="0 0 12 12"><path d="M1.5 10.5L5.5 6.5" stroke="#a6abb4" stroke-width="2.6" stroke-linecap="round"/><path d="M5 3C5 1 7.5 -0.2 9.5 0.8L7.5 3L8.5 4L10.8 1.8C11.8 3.8 10 6 8 6C6.2 6 5 4.8 5 3Z" fill="#a6abb4"/></svg>
<div class="a" style="left:6px;top:660px;width:827px;height:265px;background:#fff;"></div>
<div class="a" style="left:6px;top:660px;width:827px;height:22px;background:#4d6082;border:1px solid #8e9cc2;border-bottom:none"></div>
<div class="t" style="left:11px;top:665px;color:#ffffff;font-size:11.6px;">Error List</div>
<svg class="a" style="left:786px;top:669px;" width="7" height="4" viewBox="0 0 7 4"><path d="M0 0H7L3.5 4Z" fill="#ced4e0"/></svg>
<svg class="a" style="left:802px;top:666px;" width="8" height="12" viewBox="0 0 8 12"><path d="M1.5 0.5H6.5V6.5H1.5Z M0 6.5H8 M4 6.5V12" stroke="#ced4e0" fill="none" stroke-width="1.2"/><rect x="4.5" y="0.5" width="1.2" height="6" fill="#ced4e0"/></svg>
<svg class="a" style="left:817px;top:667px;" width="10" height="10" viewBox="0 0 10 10"><path d="M0.5 0.5L9.5 9.5M9.5 0.5L0.5 9.5" stroke="#ced4e0" stroke-width="1.3"/></svg>
<div class="a" style="left:6px;top:682px;width:827px;height:26px;background:#cfd6e5;"></div>
<div class="a" style="left:14px;top:686px;width:149px;height:19px;background:#fff;border:1px solid #cdd3e0"></div>
<div class="t" style="left:19px;top:688px;color:#111;font-size:11.6px;">Entire Solution</div>
<svg class="a" style="left:155px;top:694px;" width="5" height="3" viewBox="0 0 5 3"><path d="M0 0H5L2.5 3Z" fill="#1e1e1e"/></svg>
<div class="a" style="left:170px;top:686px;width:1px;height:19px;background:#7b879d;"></div>
<div class="a" style="left:175px;top:684px;width:70px;height:22px;background:#fff29d;border:1px solid #e5c365"></div>
<svg class="a" style="left:179px;top:689px;" width="15" height="15" viewBox="0 0 15 15"><circle cx="7.5" cy="7.5" r="7.4" fill="#fff"/><circle cx="7.5" cy="7.5" r="6.6" fill="#e51400"/><path d="M4.4 4.4L10.6 10.6M10.6 4.4L4.4 10.6" stroke="#fff" stroke-width="2.3"/></svg>
<div class="t" style="left:198px;top:688px;color:#111;font-size:11.6px;">4 Errors</div>
<div class="a" style="left:248px;top:686px;width:1px;height:19px;background:#7b879d;"></div>
<svg class="a" style="left:256px;top:688px;" width="16" height="15" viewBox="0 0 16 15"><path d="M8 0.5L15.5 14.5H0.5Z" fill="#ffcc00"/><rect x="7" y="5" width="2" height="5.5" fill="#1e1e1e"/><rect x="7" y="11.5" width="2" height="2" fill="#1e1e1e"/></svg>
<div class="t" style="left:276px;top:688px;color:#111;font-size:11.6px;">0 of 3 Warnings</div>
<div class="a" style="left:369px;top:686px;width:1px;height:19px;background:#7b879d;"></div>
<svg class="a" style="left:377px;top:688px;" width="15" height="15" viewBox="0 0 15 15"><circle cx="7.5" cy="7.5" r="7.5" fill="#1ba1e2"/><rect x="6.5" y="6" width="2.2" height="6.5" fill="#fff"/><rect x="6.5" y="2.8" width="2.2" height="2.2" fill="#fff"/></svg>
<div class="t" style="left:397px;top:688px;color:#111;font-size:11.6px;">0 Messages</div>
<div class="a" style="left:468px;top:686px;width:1px;height:19px;background:#7b879d;"></div>
<div class="a" style="left:476px;top:685px;width:150px;height:20px;background:#fff;border:1px solid #cdd3e0"></div>
<div class="t" style="left:481px;top:688px;color:#111;font-size:11.6px;">Build + IntelliSense</div>
<svg class="a" style="left:617px;top:694px;" width="5" height="3" viewBox="0 0 5 3"><path d="M0 0H5L2.5 3Z" fill="#1e1e1e"/></svg>
<div class="a" style="left:632px;top:684px;width:201px;height:21px;background:#fff;border:1px solid #cdd3e0"></div>
<div class="t" style="left:637px;top:688px;color:#6d6d6d;font-size:11.6px;">Search Error List</div>
<svg class="a" style="left:805px;top:689px;" width="13" height="13" viewBox="0 0 13 13"><circle cx="8" cy="5" r="3.8" fill="none" stroke="#424242" stroke-width="1.6"/><path d="M5.3 7.7L1 12" stroke="#424242" stroke-width="2.2"/></svg>
<svg class="a" style="left:825px;top:694px;" width="5" height="3" viewBox="0 0 5 3"><path d="M0 0H5L2.5 3Z" fill="#424242"/></svg>
<div class="a" style="left:6px;top:708px;width:827px;height:24px;background:#f5f5f7;border-bottom:1px solid #e2e4ea"></div>
<div class="a" style="left:34px;top:709px;width:1px;height:23px;background:#e2e4ea;"></div>
<div class="a" style="left:60px;top:709px;width:1px;height:23px;background:#e2e4ea;"></div>
<div class="a" style="left:228px;top:709px;width:1px;height:23px;background:#e2e4ea;"></div>
<div class="a" style="left:457px;top:709px;width:1px;height:23px;background:#e2e4ea;"></div>
<div class="a" style="left:777px;top:709px;width:1px;height:23px;background:#e2e4ea;"></div>
<div class="a" style="left:812px;top:709px;width:1px;height:23px;background:#e2e4ea;"></div>
<svg class="a" style="left:50px;top:713px;" width="7" height="7" viewBox="0 0 7 7"><path d="M0 0.5H3M3 0.5V6M5 2H6.5M5 4H6.5M5 6H6.5" stroke="#1e1e1e"/><rect x="3" y="1" width="3" height="1" fill="#1e1e1e"/></svg>
<div class="t" style="left:64px;top:714px;color:#111;font-size:11.6px;">Description</div>
<div class="t" style="left:232px;top:714px;color:#111;font-size:11.6px;">Project</div>
<div class="t" style="left:461px;top:714px;color:#111;font-size:11.6px;">File</div>
<div class="t" style="left:781px;top:714px;color:#111;font-size:11.6px;">Line</div>
<div class="a" style="left:6px;top:732px;width:827px;height:21px;background:#cccedb;"></div>
<svg class="a" style="left:38px;top:735px;" width="15" height="15" viewBox="0 0 15 15"><circle cx="7.5" cy="7.5" r="7.4" fill="#fff"/><circle cx="7.5" cy="7.5" r="6.6" fill="#e51400"/><path d="M4.4 4.4L10.6 10.6M10.6 4.4L4.4 10.6" stroke="#fff" stroke-width="2.3"/></svg>
<div class="t" style="left:60px;top:736px;color:#111;font-size:11.6px;">first defined here</div>
<div class="t" style="left:228px;top:736px;color:#111;font-size:11.6px;">Grafikdisplay_MEGA32</div>
<div class="t" style="left:457px;top:736px;color:#111;font-size:11.6px;">lcdLibrary.o</div>
<div class="t" style="left:777px;top:736px;color:#111;font-size:11.6px;">1</div>
<svg class="a" style="left:38px;top:755px;" width="15" height="15" viewBox="0 0 15 15"><circle cx="7.5" cy="7.5" r="7.4" fill="#fff"/><circle cx="7.5" cy="7.5" r="6.6" fill="#e51400"/><path d="M4.4 4.4L10.6 10.6M10.6 4.4L4.4 10.6" stroke="#fff" stroke-width="2.3"/></svg>
<div class="t" style="left:60px;top:756px;color:#111;font-size:11.6px;">recipe for target</div>
<div class="t" style="left:60px;top:771px;color:#111;font-size:11.6px;">'Grafikdisplay_MEGA32.elf'</div>
<div class="t" style="left:60px;top:786px;color:#111;font-size:11.6px;">failed</div>
<div class="t" style="left:228px;top:756px;color:#111;font-size:11.6px;">Grafikdisplay_MEGA32</div>
<div class="t" style="left:457px;top:756px;color:#111;font-size:11.6px;">Makefile</div>
<div class="t" style="left:777px;top:756px;color:#111;font-size:11.6px;">129</div>
<svg class="a" style="left:38px;top:804px;" width="15" height="15" viewBox="0 0 15 15"><circle cx="7.5" cy="7.5" r="7.4" fill="#fff"/><circle cx="7.5" cy="7.5" r="6.6" fill="#e51400"/><path d="M4.4 4.4L10.6 10.6M10.6 4.4L4.4 10.6" stroke="#fff" stroke-width="2.3"/></svg>
<div class="t" style="left:60px;top:805px;color:#111;font-size:11.6px;">multiple definition of `Ascii_1'</div>
<div class="t" style="left:228px;top:805px;color:#111;font-size:11.6px;">Grafikdisplay_MEGA32</div>
<div class="t" style="left:457px;top:805px;color:#111;font-size:11.6px;">myFont.o</div>
<div class="t" style="left:777px;top:805px;color:#111;font-size:11.6px;">1</div>
<svg class="a" style="left:38px;top:824px;" width="15" height="15" viewBox="0 0 15 15"><circle cx="7.5" cy="7.5" r="7.4" fill="#fff"/><circle cx="7.5" cy="7.5" r="6.6" fill="#e51400"/><path d="M4.4 4.4L10.6 10.6M10.6 4.4L4.4 10.6" stroke="#fff" stroke-width="2.3"/></svg>
<div class="t" style="left:60px;top:825px;color:#111;font-size:11.6px;">ld returned 1 exit status</div>
<div class="t" style="left:228px;top:825px;color:#111;font-size:11.6px;">Grafikdisplay_MEGA32</div>
<div class="t" style="left:457px;top:825px;color:#111;font-size:11.6px;">collect2.exe</div>
<div class="t" style="left:777px;top:825px;color:#111;font-size:11.6px;">0</div>
<div class="a" style="left:6px;top:132px;width:1px;height:521px;background:#cfd6e5;"></div>
<div class="a" style="left:599px;top:156px;width:1px;height:497px;background:#8e9cc2;"></div>
<div class="a" style="left:606px;top:133px;width:1px;height:436px;background:#8e9cc2;"></div>
<div class="a" style="left:832px;top:133px;width:1px;height:436px;background:#8e9cc2;"></div>
<div class="a" style="left:606px;top:598px;width:1px;height:55px;background:#8e9cc2;"></div>
<div class="a" style="left:832px;top:598px;width:1px;height:55px;background:#8e9cc2;"></div>
<div class="a" style="left:606px;top:652px;width:227px;height:1px;background:#8e9cc2;"></div>
<div class="a" style="left:6px;top:682px;width:1px;height:243px;background:#8e9cc2;"></div>
<div class="a" style="left:832px;top:682px;width:1px;height:243px;background:#8e9cc2;"></div>
</body></html>
